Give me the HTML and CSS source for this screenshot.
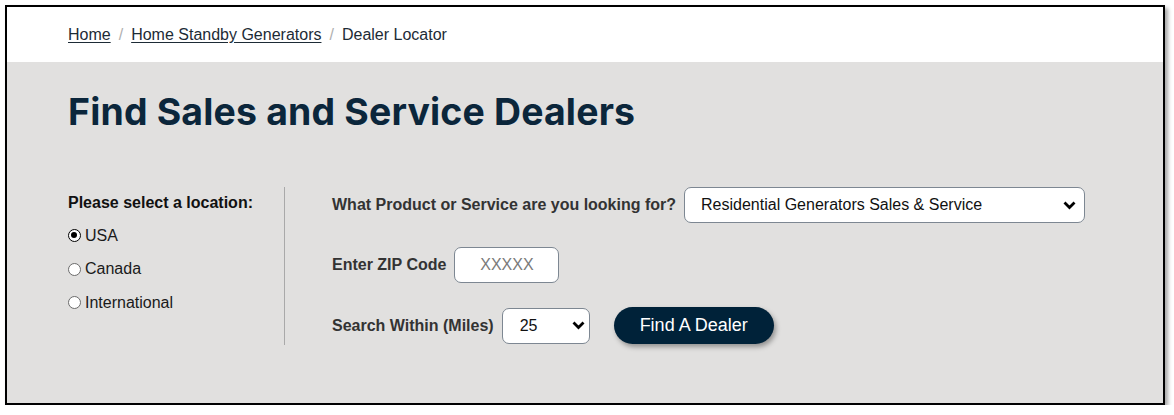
FILE: index.html
```html
<!DOCTYPE html>
<html lang="en">
<head>
<meta charset="utf-8">
<title>Dealer Locator</title>
<link rel="stylesheet" href="styles.css">
</head>
<body>
<div class="frame">
  <nav class="crumbs">
    <a href="#" class="crumb-link">Home</a>
    <span class="sep">/</span>
    <a href="#" class="crumb-link">Home Standby Generators</a>
    <span class="sep">/</span>
    <span class="crumb-current">Dealer Locator</span>
  </nav>
  <main class="locator">
    <h1 class="title">Find Sales and Service Dealers</h1>
    <div class="panel">
      <div class="locations">
        <div class="loc-title">Please select a location:</div>
        <label class="radio"><span class="dot checked"></span>USA</label>
        <label class="radio"><span class="dot"></span>Canada</label>
        <label class="radio"><span class="dot"></span>International</label>
      </div>
      <div class="form">
        <div class="row">
          <span class="label">What Product or Service are you looking for?</span>
          <div class="select select-wide">
            <span>Residential Generators Sales &amp; Service</span>
            <svg class="chev" width="13" height="9" viewBox="0 0 13 9"><path d="M1.5 1.5 L6.5 6.5 L11.5 1.5" fill="none" stroke="#000" stroke-width="2.8"/></svg>
          </div>
        </div>
        <div class="row">
          <span class="label">Enter ZIP Code</span>
          <div class="input">XXXXX</div>
        </div>
        <div class="row">
          <span class="label">Search Within (Miles)</span>
          <div class="select select-small">
            <span>25</span>
            <svg class="chev" width="13" height="9" viewBox="0 0 13 9"><path d="M1.5 1.5 L6.5 6.5 L11.5 1.5" fill="none" stroke="#000" stroke-width="2.8"/></svg>
          </div>
          <button class="btn">Find A Dealer</button>
        </div>
      </div>
    </div>
  </main>
</div>
</body>
</html>
```
FILE: styles.css
```css
* { box-sizing: border-box; }
html, body { margin: 0; padding: 0; background: #fff; }
body { font-family: "Liberation Sans", Arial, sans-serif; }

.frame {
  margin: 5px 0 0 5px;
  width: 1160px;
  height: 400px;
  border: 2px solid #000;
  box-shadow: 3px 3px 4px rgba(0,0,0,0.35);
  display: flex;
  flex-direction: column;
  background: #e1e0df;
}

.crumbs {
  background: #fff;
  height: 55px;
  padding: 18px 0 0 61px;
  font-size: 16px;
  line-height: 20px;
  color: #1d2b36;
  display: flex;
}
.crumb-link { color: #1d2b36; text-decoration: underline; text-underline-offset: 2px; }
.sep { color: #b0b0b0; margin: 0 8px; }
.crumb-current { color: #1d2b36; }

.locator { padding: 28px 0 0 61px; }
.title {
  margin: 0;
  font-family: "Inter", sans-serif;
  font-weight: 700;
  font-size: 37.4px;
  line-height: 44px;
  color: #0b263b;
  letter-spacing: 0.18px;
}

.panel { display: flex; margin-top: 53px; }

.locations {
  width: 217px;
  border-right: 1px solid #a9a9a9;
  height: 158px;
  padding-top: 6px;
}
.loc-title { font-weight: 700; font-size: 16px; color: #111; line-height: 20px; margin-bottom: 6px; }
.radio { display: flex; align-items: center; font-size: 16px; color: #1a1a1a; height: 33.5px; }
.dot {
  width: 13px; height: 13px; border-radius: 50%;
  border: 1px solid #6b6b6b; background: #fff;
  margin-right: 4px; position: relative;
}
.dot.checked { border: 1.5px solid #000; }
.dot.checked::after {
  content: ""; position: absolute; left: 2px; top: 2px;
  width: 6px; height: 6px; border-radius: 50%; background: #000;
}

.form { padding-left: 47px; display: flex; flex-direction: column; gap: 24px; }
.row { display: flex; align-items: center; }
.label { font-weight: 700; font-size: 16px; color: #333; margin-right: 8px; }

.select, .input {
  height: 36px;
  background: #fff;
  border: 1px solid #7d8792;
  border-radius: 7px;
  display: flex;
  align-items: center;
  font-size: 16px;
  color: #111;
}
.select-wide { width: 401px; padding: 0 8px 0 16px; justify-content: space-between; }
.select-small { width: 88px; padding: 0 4px 0 17px; justify-content: space-between; }
.input { width: 105px; justify-content: center; color: #7a7a7a; }

.btn {
  margin-left: 24px;
  width: 160px;
  height: 37px;
  border: none;
  border-radius: 19px;
  background: #002239;
  color: #fff;
  font-family: "Liberation Sans", Arial, sans-serif;
  font-size: 18px;
  box-shadow: 2px 3px 5px rgba(0,0,0,0.35);
}
```
